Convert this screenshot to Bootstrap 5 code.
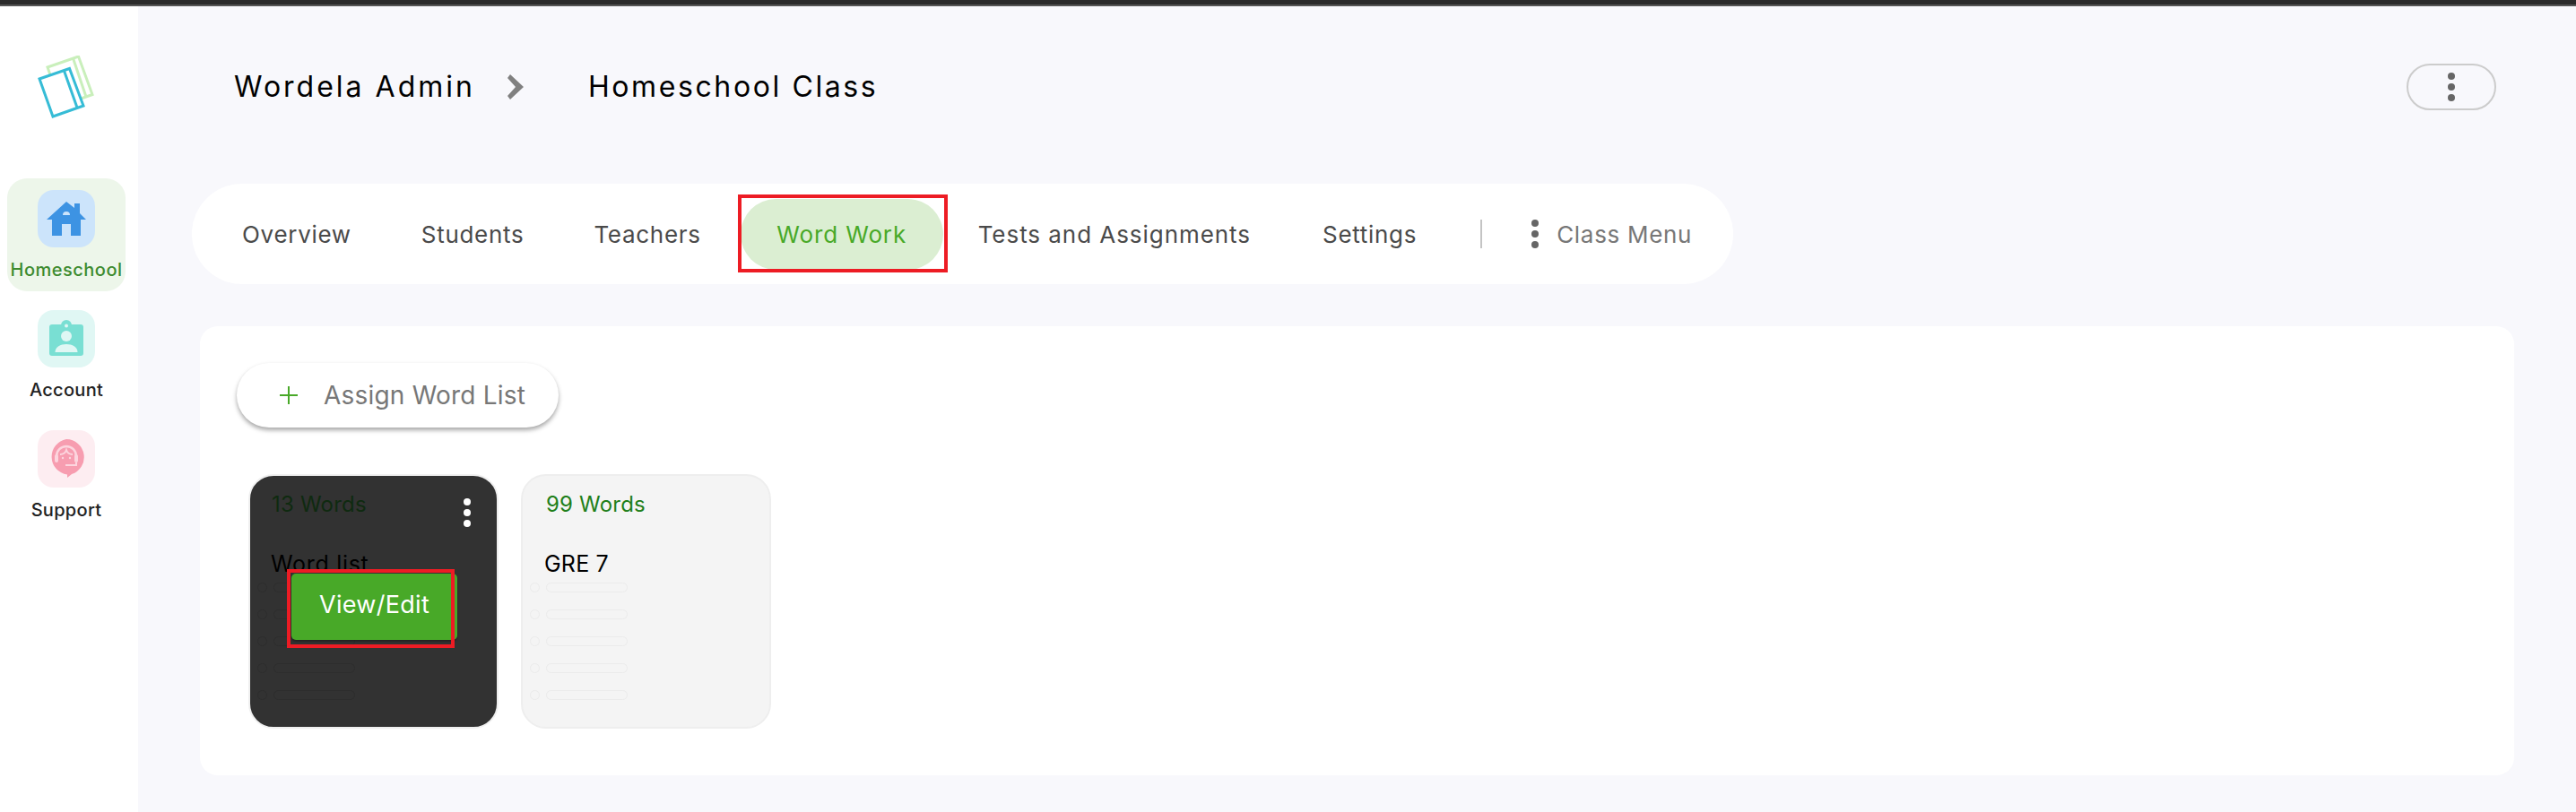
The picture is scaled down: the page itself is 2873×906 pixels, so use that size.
<!doctype html>
<html lang="en">
<head>
<meta charset="utf-8">
<title>Word Work</title>
<link href="https://cdn.jsdelivr.net/npm/bootstrap@5.3.0/dist/css/bootstrap.min.css" rel="stylesheet">
<style>
html,body{height:906px;overflow:hidden}
body{font-family:Inter,"Noto Sans",sans-serif;background:#f8f8fc;color:#000}
.topstrip{height:7px;background:#2b2b2b;border-bottom:2px solid #555}
.shell{height:899px}
.sidebar{width:154px;background:#fff;flex:none}
.logo-wrap{height:192px;padding-left:41px;padding-top:55px}
.side-item{width:132px;margin-left:8px;height:134px;border-radius:22px;font-size:20px;font-weight:500;letter-spacing:.3px;color:#222}
.side-item.on{height:126px;padding-top:13px;margin-bottom:21px;background:#edf6ea;color:#3d8b2f;letter-spacing:.5px}
.side-tile{width:64px;height:64px;border-radius:18px;margin-bottom:13px}
.t-blue{background:#cce4fb}.t-teal{background:#e0f7f4}.t-pink{background:#fdedf1}
.side-label{line-height:24px;white-space:nowrap}
.main-area{padding:0 69px;min-width:0}
.crumbs{height:52px;margin-top:64px;padding:0 20px 0 38px}
.crumb-text{font-size:32px;letter-spacing:2.6px;white-space:nowrap}
.crumb-text.first{letter-spacing:3px}
.chev{margin:0 72px 0 36px}
.kebab-btn{width:100px;height:52px;border:2px solid #ccc;border-radius:26px;background:transparent}
.dots{display:flex;flex-direction:column;gap:4px}
.dots i{display:block;width:8px;height:8px;border-radius:50%;background:#666}
.tabbar{margin:82px 0 47px -9px;height:112px;width:1719px;background:#fff;border-radius:56px;padding-left:17px;font-size:26px;color:#4a4a4a}
.tab-link{padding:0 39px;white-space:nowrap;color:#4a4a4a;text-decoration:none;letter-spacing:.7px}
.tab-link.wide{letter-spacing:.95px;padding-right:41px}
.tab-link.on{width:226px;height:79px;margin:0 0 0 5px;padding:0;flex:none;border-radius:40px;background:#dbeed2;color:#48a928;display:flex;align-items:center;justify-content:center;position:relative;letter-spacing:.9px}
.redbox{position:absolute;border:4px solid #ed1c24;pointer-events:none}
.tab-link.on .redbox{left:-3px;right:-5px;top:-5px;bottom:-3px}
.tab-sep{width:2px;height:32px;background:#c4c4c4;margin:0 55px 0 32px}
.class-menu{color:#777;margin-left:20px;letter-spacing:.7px;white-space:nowrap}
.panel{height:501px;background:#fff;border-radius:20px;padding:41px}
.assign-btn{width:359px;height:72px;border-radius:36px;background:#fff;border:0;box-shadow:0 3px 5px rgba(0,0,0,.35);padding:0 0 0 48px;font-size:28px;color:#777;letter-spacing:.2px}
.assign-btn svg{margin-right:29px}
.cards-row{margin-top:52px;margin-left:13px;gap:25px}
.wcard{width:279px;height:284px;border-radius:28px;border:2px solid #eeeeee;background:#f4f4f4;position:relative;overflow:hidden}
.wcard.dark{background:#323232;border-color:#f0f0f0}
.wc-count{font-size:24px;line-height:28px;margin:18px 0 0 26px;letter-spacing:.2px;color:#1f7f1a}
.dark .wc-count{color:#0f2a10;margin-left:24px}
.wc-title{font-size:25px;line-height:30px;margin:37px 0 0 24px;letter-spacing:.2px;color:#000}
.dark .wc-title{margin-left:23px;letter-spacing:.7px}
.sk-row{display:flex;align-items:center;margin-left:8px;height:11px;margin-top:19px;gap:7px}
.sk-row:first-of-type{margin-top:0}
.sk-list{margin-top:6px}
.sk-row b{display:block;width:11px;height:11px;border-radius:50%;border:1px solid #ebebeb}
.sk-row u{display:block;width:91px;height:11px;border-radius:6px;border:1px solid #ebebeb}
.dark .sk-row b,.dark .sk-row u{border-color:#2d2d2d}
.card-dots{position:absolute;top:25px;left:238px}
.card-dots i{background:#fff}
.view-btn{position:absolute;left:46px;top:109px;width:185px;height:74px;background:#48a928;color:#fff;border:0;border-radius:5px;font-size:27px;letter-spacing:.3px;padding:0 0 4px 0;box-shadow:0 2px 2px rgba(0,0,0,.3)}
.dark .redbox{left:41px;top:104px;width:187px;height:88px}
</style>
</head>
<body>
<div class="topstrip"></div>
<div class="shell d-flex">
  <aside class="sidebar">
    <div class="logo-wrap">
      <svg width="64" height="72" viewBox="41 62 64 72" fill="none">
        <path d="M53 75 87.500 63 103 105.500 68 118Z" stroke="#c9efbb" stroke-width="3"/>
        <path d="M81.500 65 96 108" stroke="#c9efbb" stroke-width="3"/>
        <path d="M44 88 77.500 76.500 93 118 59 130Z" fill="#fff" stroke="#36bcd6" stroke-width="3"/>
        <path d="M71.500 79 86 120" stroke="#36bcd6" stroke-width="3"/>
      </svg>
    </div>
    <div class="side-item on d-flex flex-column align-items-center">
      <div class="side-tile t-blue">
        <svg width="64" height="64" viewBox="0 0 64 64"><path d="M32 13 41 20V15H47V26L54 33H48V51H37V38H27V51H16V33H10Z" fill="#3d93e3"/><path d="M28 28a4 4 0 0 1 8 0Z" fill="#cce4fb"/></svg>
      </div>
      <div class="side-label">Homeschool</div>
    </div>
    <div class="side-item d-flex flex-column align-items-center">
      <div class="side-tile t-teal">
        <svg width="64" height="64" viewBox="0 0 64 64"><rect x="13" y="16" width="38" height="35" rx="3" fill="#79dfd3"/><circle cx="32" cy="17" r="6" fill="#79dfd3"/><circle cx="32" cy="17.500" r="2" fill="#e0f7f4"/><circle cx="32" cy="29" r="6" fill="#e0f7f4"/><path d="M19.500 47c0-6 6-9 12.500-9s12.500 3 12.500 9Z" fill="#e0f7f4"/></svg>
      </div>
      <div class="side-label">Account</div>
    </div>
    <div class="side-item d-flex flex-column align-items-center">
      <div class="side-tile t-pink">
        <svg width="64" height="64" viewBox="0 0 64 64"><path d="M32 10a20 20 0 0 1 6 39l-5 4v-3.500A20 20 0 0 1 32 10Z" fill="#f79db0"/><path d="M21 33v-4a11 11 0 0 1 22 0v4" fill="none" stroke="#fcd5de" stroke-width="2.500"/><rect x="19" y="27" width="4" height="9" rx="2" fill="#fcd5de"/><rect x="41" y="27" width="4" height="9" rx="2" fill="#fcd5de"/><path d="M43 36v3h-12" fill="none" stroke="#fcd5de" stroke-width="2"/><path d="M25 27c4 0 6-2 7-5 1 3 3 5 7 5" fill="none" stroke="#fcd5de" stroke-width="2"/><circle cx="28" cy="31" r="1.200" fill="#fcd5de"/><circle cx="36" cy="31" r="1.200" fill="#fcd5de"/></svg>
      </div>
      <div class="side-label">Support</div>
    </div>
  </aside>
  <main class="main-area flex-grow-1">
    <div class="crumbs d-flex align-items-center">
      <span class="crumb-text first">Wordela Admin</span>
      <svg class="chev" width="18" height="28" viewBox="0 0 18 28"><path d="M3 0 18 14 3 28 0 24 9 14 0 4Z" fill="#808080"/></svg>
      <span class="crumb-text">Homeschool Class</span>
      <button class="kebab-btn ms-auto d-flex align-items-center justify-content-center" type="button" aria-label="More"><span class="dots"><i></i><i></i><i></i></span></button>
    </div>
    <nav class="tabbar d-flex align-items-center">
      <a class="tab-link" href="#">Overview</a>
      <a class="tab-link" href="#">Students</a>
      <a class="tab-link" href="#">Teachers</a>
      <a class="tab-link on" href="#">Word Work<span class="redbox"></span></a>
      <a class="tab-link wide" href="#">Tests and Assignments</a>
      <a class="tab-link" href="#">Settings</a>
      <span class="tab-sep"></span>
      <span class="dots"><i></i><i></i><i></i></span>
      <span class="class-menu">Class Menu</span>
    </nav>
    <section class="panel">
      <button class="assign-btn d-flex align-items-center" type="button">
        <svg width="20" height="20" viewBox="0 0 20 20"><path d="M10 0V20M0 10H20" stroke="#48a928" stroke-width="2"/></svg>Assign Word List
      </button>
      <div class="cards-row d-flex">
        <div class="wcard dark">
          <div class="wc-count">13 Words</div>
          <div class="wc-title">Word list</div>
          <div class="sk-list"><div class="sk-row"><b></b><u></u></div><div class="sk-row"><b></b><u></u></div><div class="sk-row"><b></b><u></u></div><div class="sk-row"><b></b><u></u></div><div class="sk-row"><b></b><u></u></div></div>
          <span class="dots card-dots"><i></i><i></i><i></i></span>
          <button class="view-btn" type="button">View/Edit</button>
          <span class="redbox"></span>
        </div>
        <div class="wcard">
          <div class="wc-count">99 Words</div>
          <div class="wc-title">GRE 7</div>
          <div class="sk-list"><div class="sk-row"><b></b><u></u></div><div class="sk-row"><b></b><u></u></div><div class="sk-row"><b></b><u></u></div><div class="sk-row"><b></b><u></u></div><div class="sk-row"><b></b><u></u></div></div>
        </div>
      </div>
    </section>
  </main>
</div>
<script src="https://cdn.jsdelivr.net/npm/bootstrap@5.3.0/dist/js/bootstrap.bundle.min.js"></script>
</body>
</html>
